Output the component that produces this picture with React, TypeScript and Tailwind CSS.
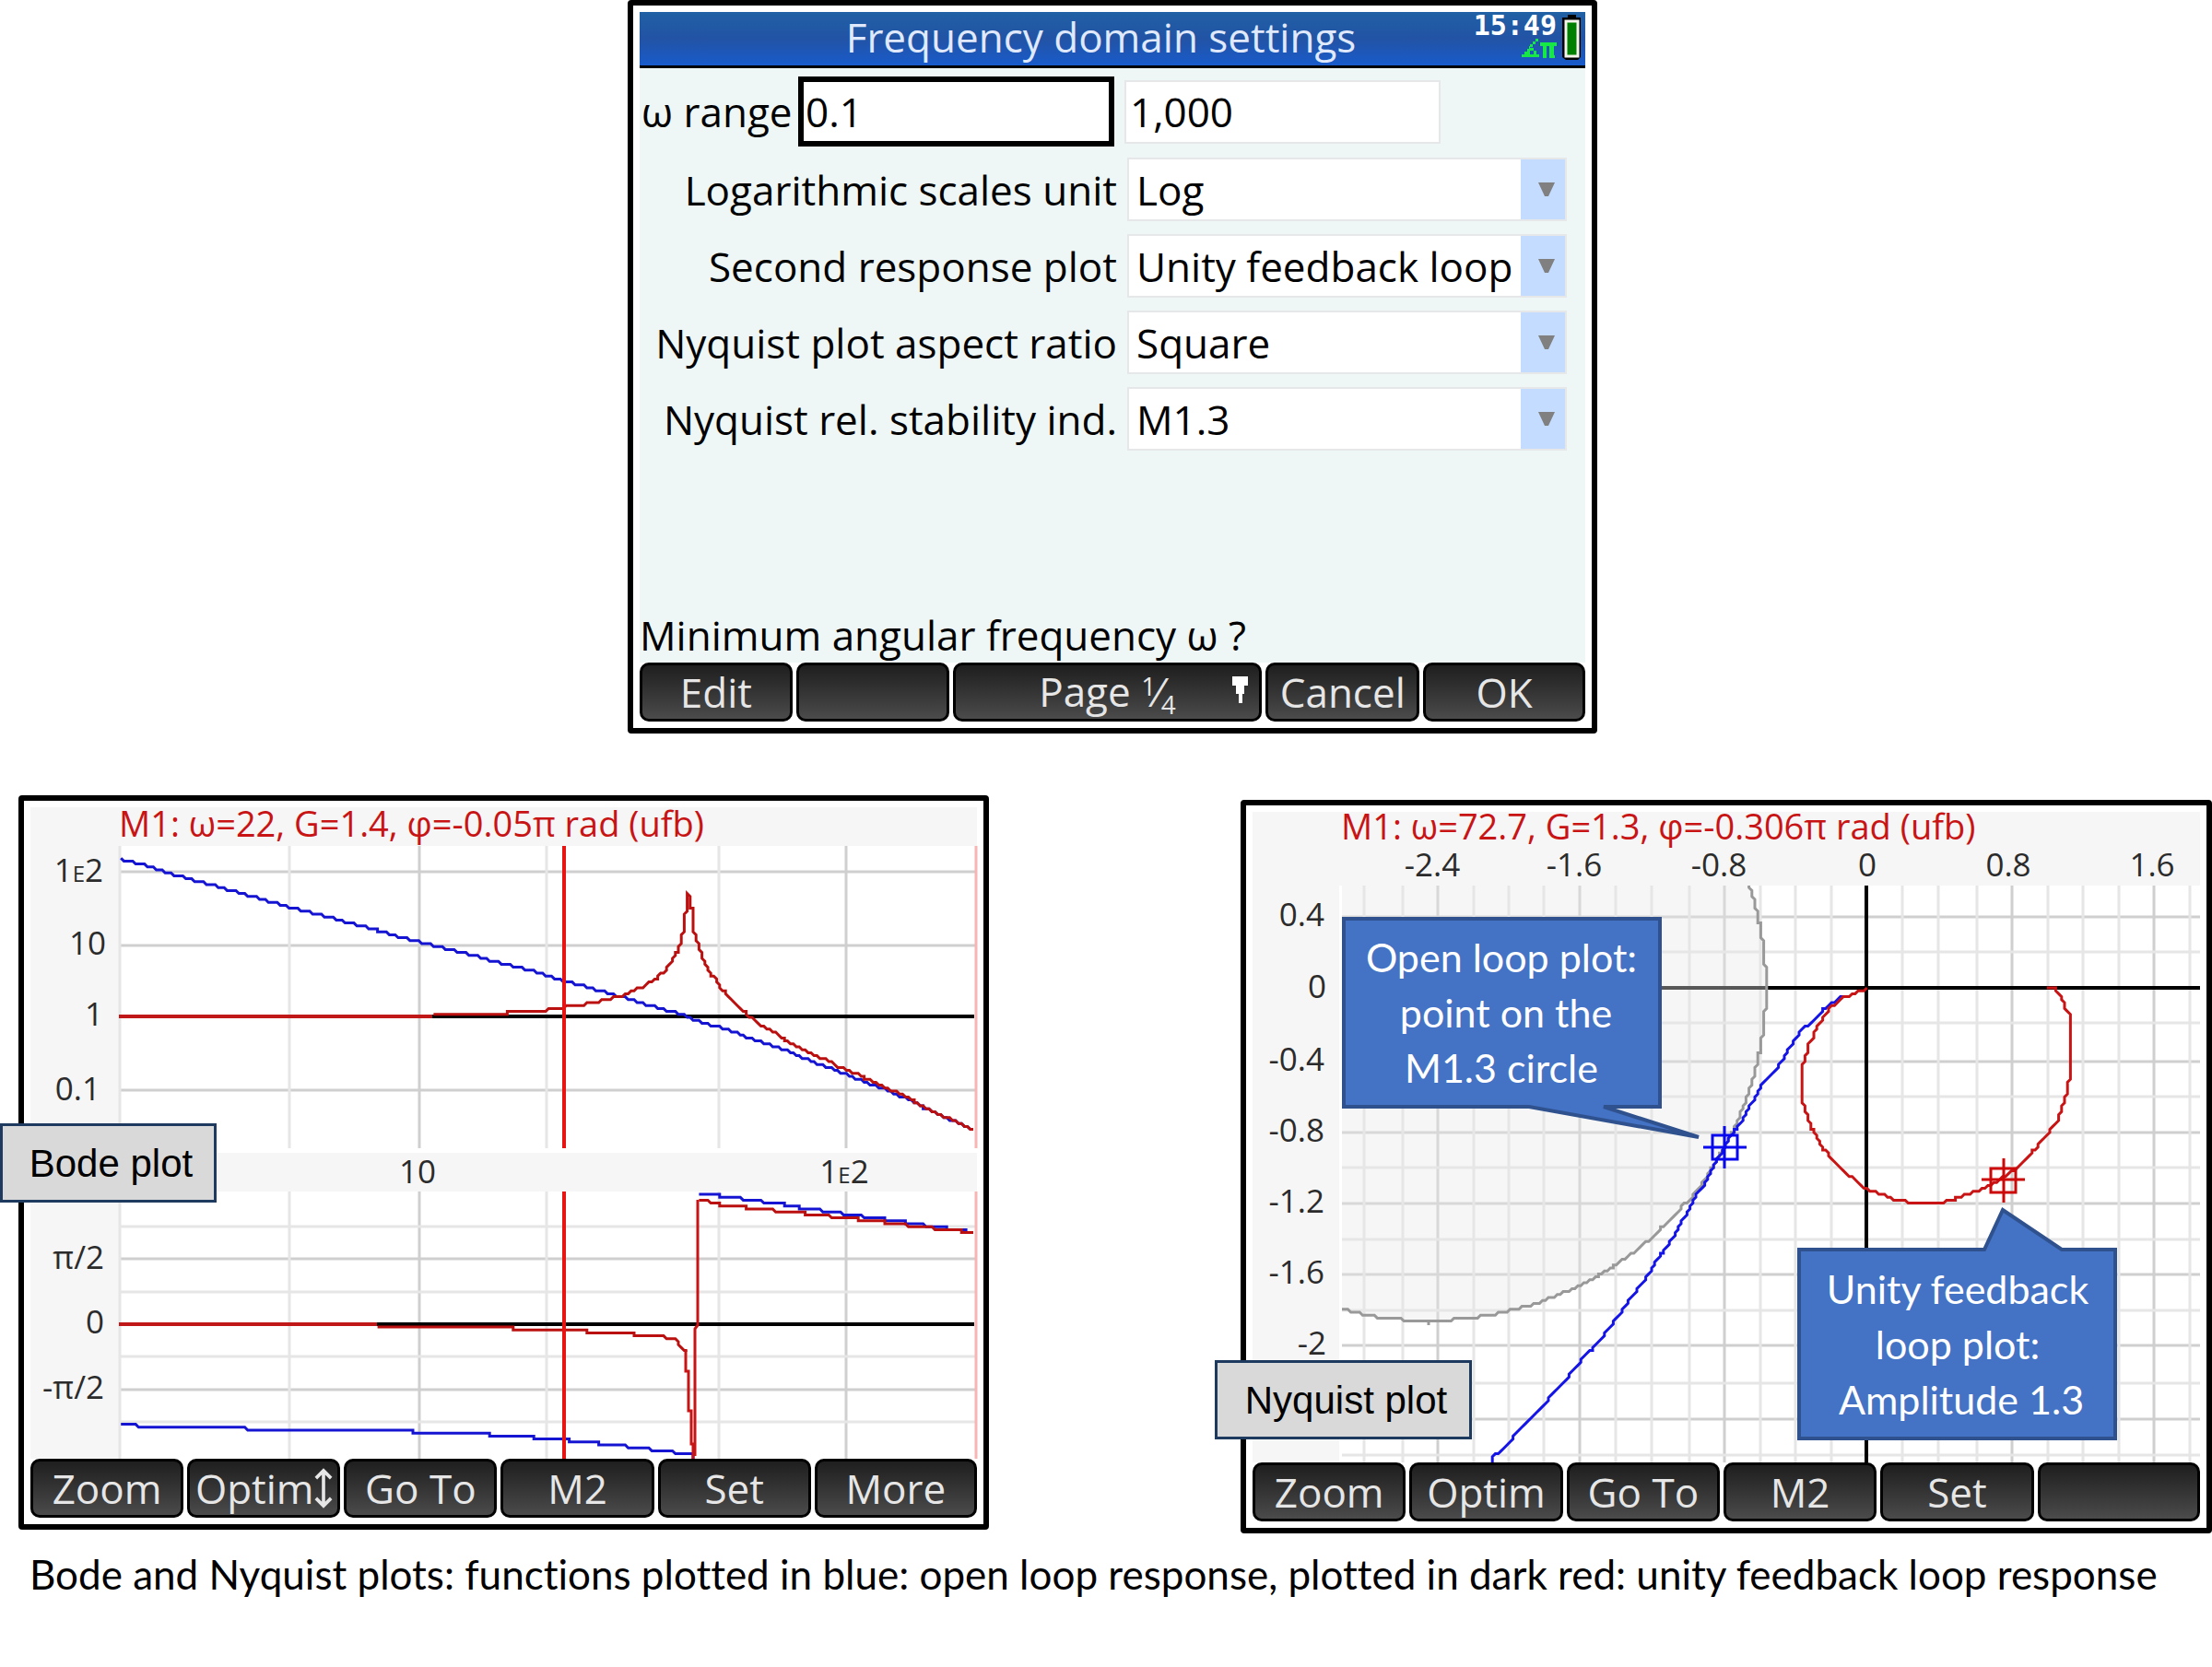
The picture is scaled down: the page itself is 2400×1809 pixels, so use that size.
import React from "react";

type Point = [number, number];

// Plot curves are snapped to calculator pixels, one cell is 3.2 units wide
const CELL = 3.2;

const rasterize = (points: Point[]) => {
  let last = "";
  let d = "";
  for (let i = 1; i < points.length; i++) {
    const [x0, y0] = points[i - 1];
    const [x1, y1] = points[i];
    const steps = Math.max(
      1,
      Math.ceil(Math.max(Math.abs(x1 - x0), Math.abs(y1 - y0)) / CELL),
    );
    for (let s = 0; s <= steps; s++) {
      const cx = Math.round((x0 + ((x1 - x0) * s) / steps) / CELL) * CELL;
      const cy = Math.round((y0 + ((y1 - y0) * s) / steps) / CELL) * CELL;
      const cell = `${cx.toFixed(1)} ${cy.toFixed(1)}`;
      if (cell === last) continue;
      d += `${d ? "L" : "M"}${cell}`;
      last = cell;
    }
  }
  return d;
};

// prettier-ignore
const gainOpen: Point[] = [
  [130, 932], [314, 984], [455, 1022], [560, 1049], [612, 1064], [676, 1082],
  [744, 1103], [780, 1115], [844, 1137], [918, 1166], [969, 1186], [1056, 1226],
];

// prettier-ignore
const gainClosed: Point[] = [
  [469, 1100], [549, 1100], [551, 1097], [593, 1096], [595, 1093], [612, 1093],
  [633, 1090], [651, 1087], [665, 1083], [676, 1081], [688, 1074], [697, 1072],
  [704, 1066], [715, 1060], [724, 1050], [731, 1040], [737, 1027], [741, 1010],
  [744, 990], [747, 970], [750, 978], [751, 993], [754, 1013], [757, 1023],
  [761, 1037], [769, 1052], [780, 1069], [790, 1082], [808, 1099], [826, 1112],
  [847, 1125], [876, 1141], [904, 1155], [933, 1167], [969, 1184], [1015, 1207],
  [1056, 1226],
];

// prettier-ignore
const phaseOpenLow: Point[] = [
  [130, 1546], [148, 1546], [149, 1549], [266, 1549], [268, 1552], [448, 1552],
  [450, 1556], [530, 1556], [532, 1559], [578, 1559], [580, 1562], [616, 1562],
  [618, 1565], [648, 1565], [650, 1569], [677, 1569], [680, 1572], [704, 1572],
  [706, 1575], [729, 1575], [732, 1578], [752, 1578], [753, 1583],
];

// prettier-ignore
const phaseOpenHigh: Point[] = [
  [757, 1296], [780, 1296], [782, 1299], [803, 1299], [805, 1302], [826, 1302],
  [828, 1305], [849, 1305], [851, 1309], [866, 1309], [868, 1312], [890, 1312],
  [892, 1315], [912, 1315], [914, 1318], [934, 1318], [936, 1321], [958, 1321],
  [960, 1325], [981, 1325], [983, 1328], [1002, 1328], [1004, 1331],
  [1026, 1331], [1028, 1334], [1051, 1334],
];

// prettier-ignore
const phaseClosedLow: Point[] = [
  [409, 1440], [556, 1440], [557, 1443], [636, 1443], [638, 1447], [687, 1447],
  [689, 1450], [720, 1450], [722, 1453], [732, 1453], [740, 1462], [744, 1466],
];

// prettier-ignore
const phaseClosedHigh: Point[] = [
  [757, 1302], [769, 1302], [771, 1305], [780, 1305], [782, 1308], [809, 1308],
  [811, 1312], [839, 1312], [841, 1315], [872, 1315], [874, 1318], [900, 1318],
  [902, 1321], [929, 1321], [931, 1325], [959, 1325], [961, 1328], [983, 1328],
  [985, 1331], [1012, 1331], [1014, 1334], [1042, 1334], [1044, 1337],
  [1057, 1337],
];

// prettier-ignore
const nyquistOpen: Point[] = [
  [2001, 1081], [1976, 1098], [1958, 1115], [1938, 1142], [1926, 1163],
  [1913, 1175], [1901, 1198], [1890, 1215], [1871, 1245], [1856, 1270],
  [1840, 1300], [1816, 1340], [1789, 1383], [1742, 1445], [1696, 1502],
  [1658, 1543], [1619, 1582], [1618, 1587],
];

// prettier-ignore
const nyquistClosed: Point[] = [
  [2222, 1071], [2229, 1073], [2236, 1080], [2240, 1090], [2245, 1102],
  [2247, 1110], [2247, 1157], [2244, 1178], [2241, 1192], [2235, 1210],
  [2228, 1223], [2215, 1238], [2201, 1255], [2186, 1270], [2165, 1283],
  [2144, 1293], [2117, 1303], [2089, 1306], [2061, 1303], [2026, 1291],
  [2004, 1273], [1988, 1257], [1978, 1247], [1969, 1230], [1961, 1212],
  [1955, 1190], [1955, 1158], [1959, 1147], [1965, 1128], [1972, 1113],
  [1985, 1095], [1999, 1083], [2011, 1078], [2025, 1073],
];

const circle: Point[] = Array.from({ length: 73 }, (_, i) => {
  const a = ((i * 2.5 - 45) * Math.PI) / 180;
  return [1550 + 366 * Math.cos(a), 1072 + 361 * Math.sin(a)];
});

const Curve = ({ points, color }: { points: Point[]; color: string }) => (
  <path d={rasterize(points)} fill="none" stroke={color} strokeWidth="3" />
);

const SoftKey = ({ children }: { children?: React.ReactNode }) => (
  <button
    type="button"
    className="relative flex h-16 items-center justify-center rounded-[10px] border-[3px] border-black bg-linear-to-b from-[#1f1f1f] to-[#4b4b4b] whitespace-nowrap text-[#e6e6e6]"
  >
    {children}
  </button>
);

const SoftKeys = ({ children }: { children: React.ReactNode }) => (
  <div className="grid grid-cols-[repeat(5,minmax(0,166fr))_minmax(0,176fr)] gap-1 text-[44px]">
    {children}
  </div>
);

const SettingSelect = ({
  id,
  label,
  value,
}: {
  id: string;
  label: string;
  value: string;
}) => (
  <div className="flex items-center gap-[11px]">
    <label htmlFor={id} className="flex-1 text-right whitespace-nowrap">
      {label}
    </label>
    <div className="relative w-[477px]">
      <select
        id={id}
        defaultValue={value}
        className="block h-[69px] w-full appearance-none border-2 border-[#e5e7e9] bg-white pl-2 leading-[60px]"
      >
        <option>{value}</option>
      </select>
      <span className="pointer-events-none absolute inset-y-0.5 right-0.5 flex w-12 items-center justify-center bg-[#c4dcff]">
        <svg width="18" height="15" viewBox="0 0 18 15" className="ml-2">
          <path d="M0 0h18L11 15H7z" fill="#808080" />
        </svg>
      </span>
    </div>
  </div>
);

const SettingsScreen = () => (
  <section className="w-full max-w-[1052px] rounded border-[6px] border-black bg-white p-[7px]">
    <div className="flex aspect-[1026/770] flex-col bg-[#eef6f6] text-[44px]">
      <header className="grid h-[61px] grid-cols-[100px_1fr_125px] border-b-[3px] border-black bg-linear-to-b from-[#2060a4] via-[#2253a5] to-[#185bcb]">
        <h1 className="col-start-2 text-center leading-[54px] text-[#dfe9fb]">
          Frequency domain settings
        </h1>
        <div className="flex justify-end gap-1.5 pr-1">
          <div className="flex flex-col items-end font-['DejaVu_Sans_Mono']">
            <time className="text-[30px] leading-[29px] font-bold text-white">
              15:49
            </time>
            <svg width="38" height="22" viewBox="0 0 38 22" fill="#16e846">
              <path d="M15 0h3v3h-3v3h-3v3h-3v1h4v3h3v4h3v3H0v-3h3v-3h3v-3h2V8h1V6h3V3h3zM9 13v4h4v-4z" />
              <path d="M20 4h18v4h-3v10h1v3h-6V8h-3v13h-4V8h-3z" />
            </svg>
          </div>
          <svg width="21" height="52" viewBox="0 0 21 52" className="mt-px">
            <path d="M6 2h9v3h5v43l-3 3H4l-4-3V5h6z" fill="#000" />
            <rect x="4" y="9" width="13" height="38" fill="#008000" stroke="#f4f4ec" strokeWidth="3" />
          </svg>
        </div>
      </header>

      <form className="flex flex-1 flex-col pt-[9px]">
        <div className="mb-3 flex h-[76px] items-center">
          <label htmlFor="omega-min" className="w-[172px] pl-0.5">
            ω range
          </label>
          <input
            id="omega-min"
            defaultValue="0.1"
            className="h-[76px] w-[343px] border-[6px] border-black bg-white pl-0.5 outline-none"
          />
          <input
            aria-label="ω maximum"
            defaultValue="1,000"
            className="ml-[11px] h-[69px] w-[343px] border-2 border-[#e5e7e9] bg-white pl-1 outline-none"
          />
        </div>
        <div className="flex flex-col gap-3.5 pr-5">
          <SettingSelect id="scale" label="Logarithmic scales unit" value="Log" />
          <SettingSelect id="second" label="Second response plot" value="Unity feedback loop" />
          <SettingSelect id="aspect" label="Nyquist plot aspect ratio" value="Square" />
          <SettingSelect id="stability" label="Nyquist rel. stability ind." value="M1.3" />
        </div>
        <p className="mt-auto leading-[60px]">Minimum angular frequency ω ?</p>
      </form>

      <div className="grid grid-cols-[166fr_166fr_336fr_167fr_176fr] gap-1 bg-white">
        <SoftKey>Edit</SoftKey>
        <SoftKey />
        <SoftKey>
          <span>
            Page <span className="align-[12px] text-[28px]">1</span>⁄
            <span className="align-[-8px] text-[28px]">4</span>
          </span>
          <svg width="17" height="30" viewBox="0 0 17 30" className="absolute right-3 bottom-4">
            <path d="M0 0h17v10h-4v9h-2v10H7V19H4v-9H0z" fill="#fff" />
          </svg>
        </SoftKey>
        <SoftKey>Cancel</SoftKey>
        <SoftKey>OK</SoftKey>
      </div>
    </div>
  </section>
);

const BodePlot = () => (
  <figure className="relative w-full max-w-[1053px] rounded border-[6px] border-black bg-white p-[7px]">
    <svg viewBox="33 876 1027 707" className="block h-auto w-full overflow-visible">
      <rect x="33" y="876" width="1027" height="707" fill="#f6f6f6" />
      <rect x="129" y="918" width="931" height="333" fill="#fff" />
      <rect x="129" y="1293" width="931" height="290" fill="#fff" />

      {/* Major grid */}
      <g stroke="#cfcfcf" strokeWidth="3">
        {[946, 1026, 1183, 1366, 1508].map((y) => (
          <path key={y} d={`M131 ${y}H1058`} />
        ))}
        {[455, 918].map((x) => (
          <path key={x} d={`M${x} 918V1246M${x} 1293V1583`} />
        ))}
      </g>
      {/* Minor grid */}
      <g stroke="#e6e6e6" strokeWidth="3">
        {[1331, 1402, 1472, 1543].map((y) => (
          <path key={y} d={`M131 ${y}H1058`} />
        ))}
        {[130, 314, 593, 780].map((x) => (
          <path key={x} d={`M${x} 918V1246M${x} 1293V1583`} />
        ))}
      </g>
      <path d="M1059 918V1246M1059 1293V1583" stroke="#f9b4b4" strokeWidth="3" />

      {/* Axes */}
      <path d="M130 1103H1057M130 1437H1057" stroke="#000" strokeWidth="4" />
      <path d="M129 1103H469M129 1437H409" stroke="#c01818" strokeWidth="4" />

      <Curve points={gainOpen} color="#1414d2" />
      <Curve points={gainClosed} color="#bb1010" />
      <Curve points={phaseOpenLow} color="#1414d2" />
      <Curve points={phaseOpenHigh} color="#1414d2" />
      <Curve points={phaseClosedLow} color="#bb1010" />
      <Curve points={phaseClosedHigh} color="#bb1010" />
      <path
        d="M744 1465V1488H747V1531H750V1567H752V1583M754 1580V1442L757 1438V1302"
        fill="none"
        stroke="#c81414"
        strokeWidth="3"
      />
      <path d="M612 918V1246M612 1293V1583" stroke="#e81414" strokeWidth="4" />

      <text x="129" y="908" fontSize="38" fill="#c81414">
        M1: ω=22, G=1.4, φ=-0.05π rad (ufb)
      </text>
      <g fontSize="35" fill="#2b2b2b" textAnchor="end">
        <text x="112" y="957">
          1<tspan fontSize="24">E</tspan>2
        </text>
        <text x="115" y="1036">10</text>
        <text x="112" y="1113">1</text>
        <text x="109" y="1194">0.1</text>
        <text x="113" y="1377">π/2</text>
        <text x="113" y="1447">0</text>
        <text x="113" y="1518">-π/2</text>
      </g>
      <g fontSize="35" fill="#2b2b2b" textAnchor="middle">
        <text x="453" y="1284">10</text>
        <text x="916" y="1284">
          1<tspan fontSize="24">E</tspan>2
        </text>
      </g>
    </svg>
    <SoftKeys>
      <SoftKey>Zoom</SoftKey>
      <SoftKey>
        Optim
        <svg width="20" height="48" viewBox="0 0 22 48" fill="none" className="shrink-0">
          <path d="M11 3V45M2 12L11 3l9 9M2 36l9 9 9-9" stroke="#e6e6e6" strokeWidth="4" />
        </svg>
      </SoftKey>
      <SoftKey>Go To</SoftKey>
      <SoftKey>M2</SoftKey>
      <SoftKey>Set</SoftKey>
      <SoftKey>More</SoftKey>
    </SoftKeys>
    <figcaption className="absolute top-[350px] -left-[26px] flex h-[86px] w-[235px] items-center justify-center border-[3px] border-[#1f3a5f] bg-[#d9d9d9] pl-1.5 font-['Liberation_Sans'] text-[42px]">
      Bode plot
    </figcaption>
  </figure>
);

const NyquistPlot = () => (
  <figure className="relative mt-[5px] w-full max-w-[1054px] rounded border-[6px] border-black bg-white p-[7px]">
    <svg viewBox="1359 881 1028 706" className="block h-auto w-full overflow-visible">
      <defs>
        <clipPath id="nyquist-area">
          <rect x="1456" y="961" width="931" height="626" />
        </clipPath>
      </defs>
      <rect x="1359" y="881" width="1028" height="706" fill="#f6f6f6" />
      <rect x="1453" y="961" width="934" height="626" fill="#fff" />

      <g clipPath="url(#nyquist-area)">
        {/* Major grid */}
        <g stroke="#cfcfcf" strokeWidth="3">
          {[995, 1152, 1229, 1306, 1383, 1460, 1540].map((y) => (
            <path key={y} d={`M1456 ${y}H2387`} />
          ))}
          {[1560, 1714, 1871, 2183, 2337].map((x) => (
            <path key={x} d={`M${x} 961V1588`} />
          ))}
        </g>
        {/* Minor grid */}
        <g stroke="#e6e6e6" strokeWidth="3">
          {[1033, 1110, 1190, 1267, 1345, 1422, 1501, 1579].map((y) => (
            <path key={y} d={`M1456 ${y}H2387`} />
          ))}
          {[
            1480, 1522, 1599, 1637, 1675, 1753, 1792, 1833, 1910, 1948, 1987,
            2064, 2103, 2145, 2222, 2260, 2299, 2376,
          ].map((x) => (
            <path key={x} d={`M${x} 961V1588`} />
          ))}
        </g>
        <path d="M1456 1072H2387M2025 961V1588" stroke="#000" strokeWidth="4" />

        {/* Constant magnitude circle */}
        <ellipse cx="1550" cy="1072" rx="366" ry="361" fill="#e8e8e8" opacity="0.38" />
        <Curve points={circle} color="#999" />
        <path d="M1550 1432v6" stroke="#999" strokeWidth="3" />

        <Curve points={nyquistOpen} color="#1414e6" />
        <Curve points={nyquistClosed} color="#c81414" />
      </g>

      {/* Markers */}
      <g fill="none" strokeWidth="3">
        <path d="M1858 1232h27v26h-27zM1848 1245h47M1871 1222v46" stroke="#0808ee" />
        <path d="M2160 1268h27v26h-27zM2150 1280h47M2174 1257v48" stroke="#cc0808" />
      </g>

      <text x="1455" y="911" fontSize="38" fill="#c81414">
        M1: ω=72.7, G=1.3, φ=-0.306π rad (ufb)
      </text>
      <g fontSize="35" fill="#2b2b2b" textAnchor="middle">
        <text x="1554" y="951">-2.4</text>
        <text x="1708" y="951">-1.6</text>
        <text x="1865" y="951">-0.8</text>
        <text x="2026" y="951">0</text>
        <text x="2179" y="951">0.8</text>
        <text x="2335" y="951">1.6</text>
      </g>
      <g fontSize="35" fill="#2b2b2b" textAnchor="end">
        <text x="1437" y="1005">0.4</text>
        <text x="1439" y="1083">0</text>
        <text x="1437" y="1162">-0.4</text>
        <text x="1437" y="1239">-0.8</text>
        <text x="1437" y="1316">-1.2</text>
        <text x="1437" y="1393">-1.6</text>
        <text x="1439" y="1470">-2</text>
      </g>

      {/* Callouts */}
      <g fill="#4472c4" stroke="#2f528f" strokeWidth="4">
        <path d="M1458 997H1801V1201H1740L1843 1234 1659 1201H1458z" />
        <path d="M1952 1356H2153L2173 1313 2237 1356H2295V1561H1952z" />
      </g>
      <g className="font-[Lato]" fontSize="43" fill="#fff" textAnchor="middle">
        <text x="1629" y="1055">Open loop plot:</text>
        <text x="1634" y="1115">point on the</text>
        <text x="1629" y="1175">M1.3 circle</text>
        <text x="2124" y="1415">Unity feedback</text>
        <text x="2124" y="1475">loop plot:</text>
        <text x="2128" y="1535">Amplitude 1.3</text>
      </g>
    </svg>
    <SoftKeys>
      <SoftKey>Zoom</SoftKey>
      <SoftKey>Optim</SoftKey>
      <SoftKey>Go To</SoftKey>
      <SoftKey>M2</SoftKey>
      <SoftKey>Set</SoftKey>
      <SoftKey />
    </SoftKeys>
    <figcaption className="absolute top-[602px] -left-[34px] flex h-[86px] w-[279px] items-center justify-center border-[3px] border-[#1f3a5f] bg-[#d9d9d9] pl-1.5 font-['Liberation_Sans'] text-[42px]">
      Nyquist plot
    </figcaption>
  </figure>
);

export default function App() {
  return (
    <main className="min-h-screen overflow-x-hidden bg-white font-['Open_Sans',sans-serif] text-black">
      <div className="flex justify-center pl-3.5">
        <SettingsScreen />
      </div>
      <div className="mt-[67px] flex items-start justify-between gap-8 pl-5">
        <BodePlot />
        <NyquistPlot />
      </div>
      <p className="mt-3.5 pl-8 font-[Lato] text-[44px] leading-[60px] [font-variant-ligatures:none]">
        Bode and Nyquist plots: functions plotted in blue: open loop response,
        plotted in dark red: unity feedback loop response
      </p>
    </main>
  );
}
